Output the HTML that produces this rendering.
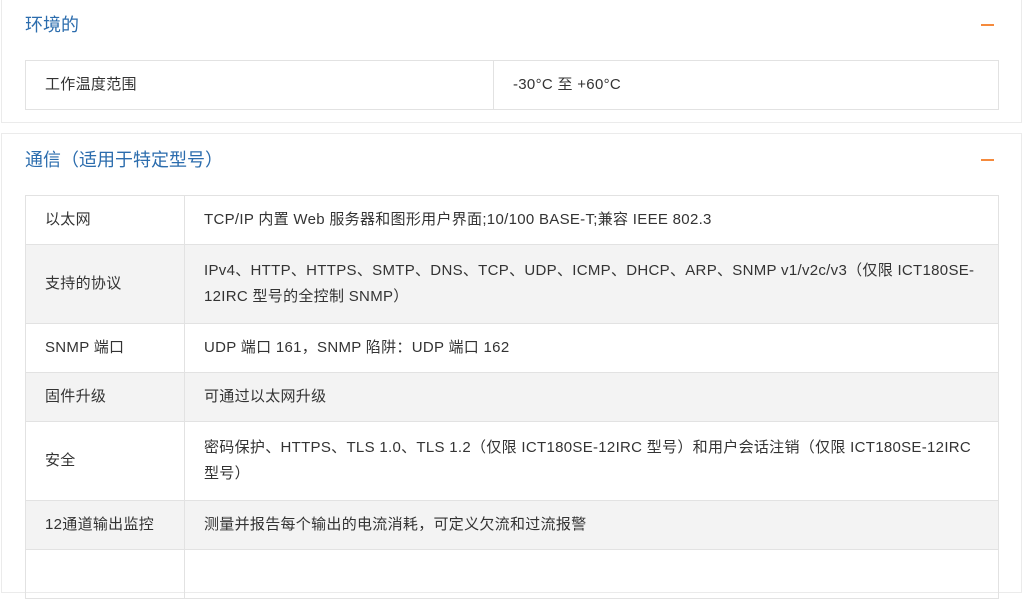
<!DOCTYPE html>
<html><head><meta charset="utf-8"><style>
body{margin:0;background:#fff;font-family:"Liberation Sans","Noto Sans CJK SC",sans-serif;color:#333;font-size:15px;width:1024px;height:551px;overflow:hidden;position:relative}
.card{position:absolute;left:1px;width:1021px;border:1px solid #ebebeb;background:#fff;box-sizing:border-box}
.t{position:absolute;left:23px;font-size:18px;color:#2b6cad}
.m{position:absolute;left:979px;width:13px;height:2px;background:#f58a3c}
table{position:absolute;left:23px;width:974px;border-collapse:collapse}
td{border:1px solid #e2e2e2;padding:0 0 0 19px;line-height:26px;vertical-align:middle;box-sizing:border-box;letter-spacing:0.3px}
tr.g td{background:#f3f3f3}
</style></head><body>
<div class="card" style="top:-5px;height:128px">
<div class="t" style="top:15px">环境的</div>
<div class="m" style="top:28px"></div>
<table style="top:64px"><tr style="height:49px"><td style="width:468px">工作温度范围</td><td>-30°C 至 +60°C</td></tr></table>
</div>
<div class="card" style="top:133px;height:460px">
<div class="t" style="top:12px">通信（适用于特定型号）</div>
<div class="m" style="top:25px"></div>
<table style="top:61px">
<tr style="height:49px"><td style="width:159px">以太网</td><td>TCP/IP 内置 Web 服务器和图形用户界面;10/100 BASE-T;兼容 IEEE 802.3</td></tr>
<tr class="g" style="height:79px"><td>支持的协议</td><td>IPv4、HTTP、HTTPS、SMTP、DNS、TCP、UDP、ICMP、DHCP、ARP、SNMP v1/v2c/v3（仅限 ICT180SE-<br>12IRC 型号的全控制 SNMP）</td></tr>
<tr style="height:49px"><td>SNMP 端口</td><td>UDP 端口 161，SNMP 陷阱：UDP 端口 162</td></tr>
<tr class="g" style="height:49px"><td>固件升级</td><td>可通过以太网升级</td></tr>
<tr style="height:79px"><td>安全</td><td>密码保护、HTTPS、TLS 1.0、TLS 1.2（仅限 ICT180SE-12IRC 型号）和用户会话注销（仅限 ICT180SE-12IRC<br>型号）</td></tr>
<tr class="g" style="height:49px"><td>12通道输出监控</td><td>测量并报告每个输出的电流消耗，可定义欠流和过流报警</td></tr>
<tr style="height:49px"><td>&nbsp;</td><td>&nbsp;</td></tr>
</table>
</div>
</body></html>
